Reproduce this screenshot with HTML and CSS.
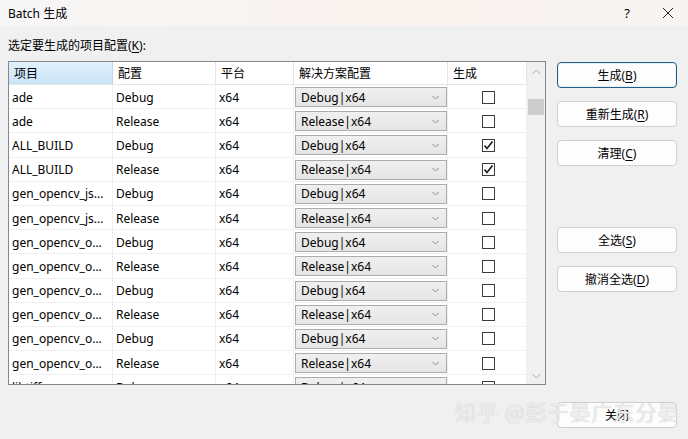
FILE: index.html
```html
<!DOCTYPE html>
<html>
<head>
    <title>Batch 生成</title>
    <link rel="stylesheet" href="styles.css">
</head>
<body>
    <div class="dialog">
        <div class="title-bar">
            <span class="title">Batch 生成</span>
            <span class="title-btn help">?</span>
            <span class="title-btn close">
                <svg width="12" height="12" viewBox="0 0 12 12"><path d="M1 1 L11 11 M11 1 L1 11" stroke="#222" stroke-width="1"/></svg>
            </span>
        </div>
        <div class="content">
            <div class="left-col">
                <p class="label">选定要生成的项目配置(<u>K</u>):</p>
                <div class="grid">
                    <div class="grid-main">
                        <div class="row head">
                            <div class="cell selected">项目</div>
                            <div class="cell">配置</div>
                            <div class="cell">平台</div>
                            <div class="cell">解决方案配置</div>
                            <div class="cell">生成</div>
                        </div>
                        <div id="rows"></div>
                    </div>
                    <div class="scrollbar">
                        <svg class="arrow" width="9" height="6" viewBox="0 0 9 6"><path d="M0.5 5 L4.5 1 L8.5 5" fill="none" stroke="#a8a8a8" stroke-width="1"/></svg>
                        <div class="track"><div class="thumb"></div></div>
                        <svg class="arrow" width="9" height="6" viewBox="0 0 9 6"><path d="M0.5 1 L4.5 5 L8.5 1" fill="none" stroke="#a8a8a8" stroke-width="1"/></svg>
                    </div>
                </div>
            </div>
            <div class="right-col">
                <button class="btn default">生成(<u>B</u>)</button>
                <button class="btn">重新生成(<u>R</u>)</button>
                <button class="btn">清理(<u>C</u>)</button>
                <button class="btn gap">全选(<u>S</u>)</button>
                <button class="btn">撤消全选(<u>D</u>)</button>
                <button class="btn bottom">关闭</button>
            </div>
        </div>
        <div class="watermark">知乎 @彭于晏广东分晏</div>
    </div>
    <script>
        (function() {
            var rows = document.getElementById('rows'),
                data = [
                    ['ade', 'Debug', false],
                    ['ade', 'Release', false],
                    ['ALL_BUILD', 'Debug', true],
                    ['ALL_BUILD', 'Release', true],
                    ['gen_opencv_js...', 'Debug', false],
                    ['gen_opencv_js...', 'Release', false],
                    ['gen_opencv_o...', 'Debug', false],
                    ['gen_opencv_o...', 'Release', false],
                    ['gen_opencv_o...', 'Debug', false],
                    ['gen_opencv_o...', 'Release', false],
                    ['gen_opencv_o...', 'Debug', false],
                    ['gen_opencv_o...', 'Release', false],
                    ['libtiff', 'Debug', false]
                ],
                check = '<svg width="11" height="11" viewBox="0 0 11 11"><path d="M1.5 5.5 L4 8.5 L9.5 1.5" fill="none" stroke="#1a1a1a" stroke-width="1.6"/></svg>',
                chevron = '<svg width="7" height="5" viewBox="0 0 7 5"><path d="M0.5 1 L3.5 4 L6.5 1" fill="none" stroke="#8a8a8a" stroke-width="1"/></svg>',
                html = '';

            data.forEach(function(item) {
                html += '<div class="row">' +
                    '<div class="cell">' + item[0] + '</div>' +
                    '<div class="cell">' + item[1] + '</div>' +
                    '<div class="cell">x64</div>' +
                    '<div class="cell"><div class="combo"><span>' + item[1] + '|x64</span>' + chevron + '</div></div>' +
                    '<div class="cell center"><span class="checkbox">' + (item[2] ? check : '') + '</span></div>' +
                    '</div>';
            });
            rows.innerHTML = html;
        })();
    </script>
</body>
</html>
```

FILE: styles.css
```css
*, *::before, *::after { padding: 0; margin: 0; box-sizing: border-box; }
body { font-family: 'Noto Sans', 'Noto Sans CJK SC', sans-serif; font-size: 12px; color: #000; background: #f0f0f0; }
u { text-decoration: underline; text-underline-offset: 2px; }

.dialog { position: relative; width: 688px; height: 439px; overflow: hidden; background: #f0f0f0; }

.title-bar { height: 26px; display: flex; align-items: center; padding-left: 8px; background: linear-gradient(90deg, #f7f6f6, #faf3ef 60%, #f7f4f3); }
.title { flex: 1; font-size: 12px; }
.title-btn { height: 26px; display: flex; align-items: center; justify-content: center; font-size: 13px; }
.title-btn.help { width: 46px; padding-left: 4px; }
.title-btn.close { width: 40px; }

.content { display: flex; padding: 10px 11px 0 8px; }
.left-col { width: 538px; }
.label { height: 20px; line-height: 20px; margin-bottom: 5px; }

.grid { height: 324px; border: 1px solid #828790; background: #fff; display: flex; }
.grid-main { width: 518px; overflow: hidden; }
.row { display: grid; grid-template-columns: 104px 103px 78px 154px 79px; height: 24.2px; border-bottom: 1px solid #f0f0f0; }
.row.head { height: 23px; border-bottom: 1px solid #e5e5e5; }
.cell { display: flex; align-items: center; padding: 1px 0 0 3px; white-space: nowrap; overflow: hidden; border-right: 1px solid #f0f0f0; }
.head .cell { padding: 0 0 0 5px; border-right: 1px solid #e5e5e5; }
.head .cell.selected { background: linear-gradient(#e3f1fb, #c9e4f7); border-right: 1px solid #b8d8f0; }
.cell.center { justify-content: center; padding: 1px 0 0 2px; }

.combo { width: 152px; height: 20px; margin-left: -2px; display: flex; align-items: center; justify-content: space-between; padding: 0 7px 0 5px; border: 1px solid #acacac; background: linear-gradient(#f0f0f0, #e5e5e5); }
.checkbox { width: 13px; height: 13px; border: 1px solid #3c3c3c; background: #fff; display: flex; align-items: center; justify-content: center; }

.scrollbar { width: 18px; background: #f0f0f0; display: flex; flex-direction: column; align-items: center; padding: 7px 0 5px; }
.track { flex: 1; width: 100%; padding-top: 24px; }
.thumb { height: 16px; margin: 0 1px; background: #cdcdcd; }

.right-col { display: flex; flex-direction: column; margin-left: 11px; padding-top: 26px; }
.btn { width: 120px; height: 26px; margin-bottom: 13px; font-family: inherit; font-size: 12px; background: #fdfdfd; border: 1px solid #d0d0d0; border-radius: 4px; color: #000; }
.btn.default { border: 1px solid #1f5f8a; box-shadow: inset 0 0 0 1px #e8f1f8; }
.btn.gap { margin-top: 48px; }
.btn.bottom { margin-top: 97px; }

.watermark { position: absolute; left: 455px; top: 396px; font-family: 'Noto Sans CJK SC', sans-serif; font-size: 21px; letter-spacing: 1px; color: rgba(255, 255, 255, 0.8); text-shadow: 0 0 1px #a8a8a8; }
```
